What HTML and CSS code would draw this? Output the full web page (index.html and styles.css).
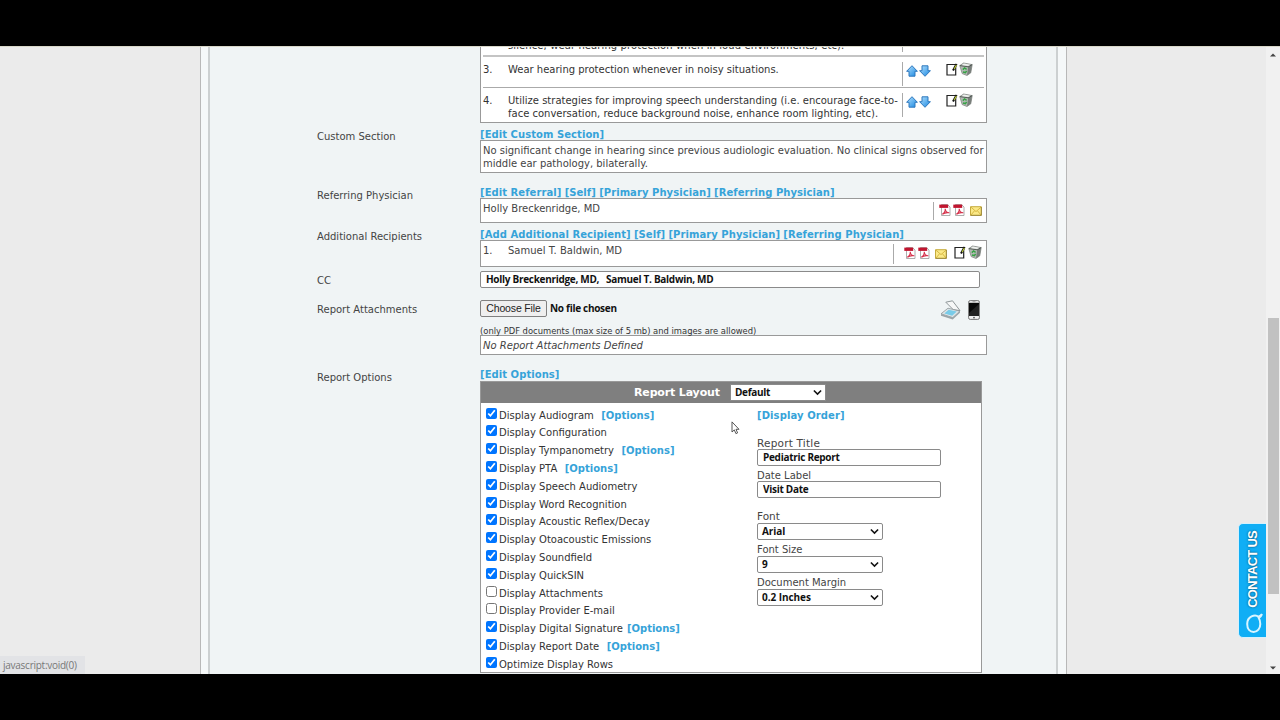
FILE: index.html
```
<!DOCTYPE html>
<html lang="en">
<head>
    <meta charset="utf-8">
    <title>Report</title>
    <link rel="stylesheet" href="styles.css">
</head>

<body>
    <svg class="defs" width="0" height="0">
        <defs>
            <linearGradient id="blue" x1="0" y1="0" x2="1" y2="1">
                <stop offset="0" stop-color="#b5e2ff"/>
                <stop offset="1" stop-color="#1686e0"/>
            </linearGradient>
        </defs>
        <symbol id="up" viewBox="0 0 12 12">
            <path d="M6 .7 11.4 6.3H9V11.2H3V6.3H.6Z" fill="url(#blue)" stroke="#2f78bd" stroke-linejoin="round"/>
        </symbol>
        <symbol id="down" viewBox="0 0 12 12">
            <path d="M6 11.3 .6 5.7H3V.8H9V5.7H11.4Z" fill="url(#blue)" stroke="#2f78bd" stroke-linejoin="round"/>
        </symbol>
        <symbol id="edit" viewBox="0 0 12 13">
            <path d="M1 1.5H9.7V12H1Z" fill="#fff" stroke="#222" stroke-width="1.2"/>
            <path d="M7 7.6 10.6 1" stroke="#111" stroke-width="2"/>
            <path d="M8.2 6 10.4 2" stroke="#c6d53a" stroke-width="1.1"/>
        </symbol>
        <symbol id="trash" viewBox="0 0 14 14">
            <path d="M.8 3.6 4.6 1 13.2 2.6 11.8 10.8 8 13.5 3.2 11.6Z" fill="#b4b9b4" stroke="#777d79" stroke-width=".7"/>
            <path d="M9.2 4.8 13 2.8 11.7 10.7 8 13.3Z" fill="#787e7a"/>
            <path d="M.8 3.6 9.2 4.8 13.2 2.6" fill="none" stroke="#4a504c" stroke-width=".9"/>
            <path d="M2.6 3 5 1.5 11.4 2.7 9 4Z" fill="#eef0ee"/>
            <path d="M3.8 7.6 5.6 6 7.6 7.4M7.6 8.8 6.4 10.6 4 10" fill="none" stroke="#35a344" stroke-width="1.5"/>
        </symbol>
        <symbol id="pdf" viewBox="0 0 12 12">
            <path d="M2.5.5H8.5L11 3V11.5H2.5Z" fill="#fff" stroke="#999" stroke-width=".8"/>
            <path d="M.3.6H9.2V3.9H.3Z" fill="#c1152f"/>
            <path d="M3.3 10.3C5.5 9 6.5 7 6.2 4.8 6.5 7.5 8 8.8 10.3 8.8 8 8.3 5.2 8.9 3.3 10.3Z" fill="none" stroke="#d5304a" stroke-width="1.1"/>
        </symbol>
        <symbol id="mail" viewBox="0 0 12 10">
            <path d="M.5.7H11.3V9.3H.5Z" fill="#fbe988" stroke="#bfa32e" stroke-width=".9"/>
            <path d="M1 1.2 6 5.6 11 1.2M1 9 4.5 4.8M11 9 7.5 4.8" fill="none" stroke="#d2b23c" stroke-width=".9"/>
            <path d="M.5 9.4H11.4V1" fill="none" stroke="#8b7b35" stroke-width=".7"/>
        </symbol>
        <symbol id="scanner" viewBox="0 0 21 20">
            <path d="M5.8 2.2 12.5.8 20 10.6 13.2 9.6Z" fill="#f6f7f7" stroke="#8e9698"/>
            <path d="M1 13.8 8 8.2 19.8 11.2 12.8 17.6Z" fill="#dfe5e7" stroke="#8d9699" stroke-width=".8"/>
            <path d="M4.3 13.4 8.6 9.7 16.8 11.6 12.2 15.7Z" fill="#79cbe8"/>
            <path d="M1 14V15.8L12.7 19.5 20 12.8V11.3L12.8 17.6Z" fill="#9aa4a8"/>
        </symbol>
        <symbol id="phone" viewBox="0 0 12 20">
            <rect x=".6" y=".6" width="10.8" height="18.8" rx="1.6" fill="#f2f2f2" stroke="#777" stroke-width="1"/>
            <path d="M1 2.8H11V16H1Z" fill="#080808"/>
            <path d="M1 13 11 4V16H1Z" fill="#222"/>
            <circle cx="6" cy="17.6" r=".9" fill="#555"/>
            <path d="M4.5 1.7H7.5" stroke="#777" stroke-width=".6"/>
        </symbol>
    </svg>

    <div class="viewport">
        <div class="page">
            <div class="form">

                <div class="row row-list">
                    <div class="label"></div>
                    <div class="field">
                        <div class="box list">
                            <div class="item item-cut">
                                <span class="num"></span>
                                <span class="text">silence, wear hearing protection when in loud environments, etc).</span>
                                <span class="tools"></span>
                            </div>
                            <div class="item item-short">
                                <span class="num">3.</span>
                                <span class="text">Wear hearing protection whenever in noisy situations.</span>
                                <span class="tools">
                                    <svg class="arrow"><use href="#up"/></svg>
                                    <svg class="arrow"><use href="#down"/></svg>
                                    <svg class="edit"><use href="#edit"/></svg>
                                    <svg class="trash"><use href="#trash"/></svg>
                                </span>
                            </div>
                            <div class="item">
                                <span class="num">4.</span>
                                <span class="text">Utilize strategies for improving speech understanding (i.e. encourage face-to-<br>face conversation, reduce background noise, enhance room lighting, etc).</span>
                                <span class="tools">
                                    <svg class="arrow"><use href="#up"/></svg>
                                    <svg class="arrow"><use href="#down"/></svg>
                                    <svg class="edit"><use href="#edit"/></svg>
                                    <svg class="trash"><use href="#trash"/></svg>
                                </span>
                            </div>
                        </div>
                    </div>
                </div>

                <div class="row row-custom">
                    <div class="label">Custom Section</div>
                    <div class="field">
                        <div class="links"><a>[Edit Custom Section]</a></div>
                        <div class="box custom">No significant change in hearing since previous audiologic evaluation. No clinical signs observed for<br>middle ear pathology, bilaterally.</div>
                    </div>
                </div>

                <div class="row row-referring">
                    <div class="label">Referring Physician</div>
                    <div class="field">
                        <div class="links"><a>[Edit Referral]</a> <a>[Self]</a> <a>[Primary Physician]</a> <a>[Referring Physician]</a></div>
                        <div class="box person referring">
                            <span class="text">Holly Breckenridge, MD</span>
                            <span class="tools">
                                <svg class="pdf"><use href="#pdf"/></svg>
                                <svg class="pdf"><use href="#pdf"/></svg>
                                <svg class="mail"><use href="#mail"/></svg>
                            </span>
                        </div>
                    </div>
                </div>

                <div class="row row-additional">
                    <div class="label">Additional Recipients</div>
                    <div class="field">
                        <div class="links"><a>[Add Additional Recipient]</a> <a>[Self]</a> <a>[Primary Physician]</a> <a>[Referring Physician]</a></div>
                        <div class="box person additional">
                            <span class="num">1.</span>
                            <span class="text">Samuel T. Baldwin, MD</span>
                            <span class="tools">
                                <svg class="pdf"><use href="#pdf"/></svg>
                                <svg class="pdf"><use href="#pdf"/></svg>
                                <svg class="mail"><use href="#mail"/></svg>
                                <svg class="edit"><use href="#edit"/></svg>
                                <svg class="trash"><use href="#trash"/></svg>
                            </span>
                        </div>
                    </div>
                </div>

                <div class="row row-cc">
                    <div class="label">CC</div>
                    <div class="field">
                        <input class="cc" type="text" value="Holly Breckenridge, MD,&nbsp;&nbsp; Samuel T. Baldwin, MD">
                    </div>
                </div>

                <div class="row row-attach">
                    <div class="label">Report Attachments</div>
                    <div class="field">
                        <div class="file">
                            <button class="choose">Choose File</button>
                            <span class="nofile">No file chosen</span>
                            <svg class="scanner"><use href="#scanner"/></svg>
                            <svg class="phone"><use href="#phone"/></svg>
                        </div>
                        <div class="note">(only PDF documents (max size of 5 mb) and images are allowed)</div>
                        <div class="box empty">No Report Attachments Defined</div>
                    </div>
                </div>

                <div class="row row-options">
                    <div class="label">Report Options</div>
                    <div class="field">
                        <div class="links"><a>[Edit Options]</a></div>
                        <div class="options">
                            <div class="options-head">
                                <span class="layout">Report Layout</span>
                                <span class="select layout-select">Default<svg viewBox="0 0 8 6"><path d="M.8 1.2 4 4.4 7.2 1.2"/></svg></span>
                            </div>
                            <div class="options-body">
                                <div class="checks">
                                    <label><input type="checkbox" checked><span class="c1">Display Audiogram</span> <a>[Options]</a></label>
                                    <label><input type="checkbox" checked><span>Display Configuration</span></label>
                                    <label><input type="checkbox" checked><span class="c1">Display Tympanometry</span> <a>[Options]</a></label>
                                    <label><input type="checkbox" checked><span class="c1">Display PTA</span> <a>[Options]</a></label>
                                    <label><input type="checkbox" checked><span>Display Speech Audiometry</span></label>
                                    <label><input type="checkbox" checked><span>Display Word Recognition</span></label>
                                    <label><input type="checkbox" checked><span>Display Acoustic Reflex/Decay</span></label>
                                    <label><input type="checkbox" checked><span>Display Otoacoustic Emissions</span></label>
                                    <label><input type="checkbox" checked><span>Display Soundfield</span></label>
                                    <label><input type="checkbox" checked><span>Display QuickSIN</span></label>
                                    <label><input type="checkbox"><span>Display Attachments</span></label>
                                    <label><input type="checkbox"><span>Display Provider E-mail</span></label>
                                    <label><input type="checkbox" checked><span class="c2">Display Digital Signature</span> <a>[Options]</a></label>
                                    <label><input type="checkbox" checked><span class="c1">Display Report Date</span> <a>[Options]</a></label>
                                    <label><input type="checkbox" checked><span>Optimize Display Rows</span></label>
                                </div>
                                <div class="settings">
                                    <a class="order">[Display Order]</a>
                                    <div class="caption title">Report Title</div>
                                    <input type="text" value="Pediatric Report">
                                    <div class="caption second">Date Label</div>
                                    <input type="text" value="Visit Date">
                                    <div class="caption font">Font</div>
                                    <span class="select">Arial<svg viewBox="0 0 8 6"><path d="M.8 1.2 4 4.4 7.2 1.2"/></svg></span>
                                    <div class="caption next">Font Size</div>
                                    <span class="select">9<svg viewBox="0 0 8 6"><path d="M.8 1.2 4 4.4 7.2 1.2"/></svg></span>
                                    <div class="caption next">Document Margin</div>
                                    <span class="select">0.2 Inches<svg viewBox="0 0 8 6"><path d="M.8 1.2 4 4.4 7.2 1.2"/></svg></span>
                                </div>
                            </div>
                        </div>
                    </div>
                </div>

            </div>
        </div>

        <div class="scrollbar">
            <svg class="sb-arrow" viewBox="0 0 6 4"><path d="M0 3.5 3 .5 6 3.5Z"/></svg>
            <div class="thumb"></div>
            <svg class="sb-arrow sb-down" viewBox="0 0 6 4"><path d="M0 .5 3 3.5 6 .5Z"/></svg>
        </div>

        <div class="contact">
            <span>CONTACT US</span>
            <svg viewBox="0 0 18 21"><path d="M13.5 3.8C10 .8 2.2 3.5 2.2 11 2.2 16 5 19 8.6 19 12.5 19 15.3 15.5 15.3 11 15.3 8.5 14.7 6.5 13.8 5 15 4.6 16.3 3 17 1.2 16 2.5 15 3.2 13.5 3.8Z"/></svg>
        </div>
        <div class="status">javascript:void(0)</div>
        <svg class="cursor" viewBox="0 0 9 14"><path d="M1 .9V11L3.3 8.9 4.9 12.6 6.6 11.9 5 8.3H8Z"/></svg>
    </div>
</body>
</html>
```
FILE: styles.css
```
* {
    box-sizing: border-box;
}

body {
    margin: 0;
    padding: 46px 0;
    height: 720px;
    overflow: hidden;
    background: #000;
    font-family: Verdana, "DejaVu Sans", sans-serif;
    font-size: 10px;
    line-height: 13px;
    color: #444;
}

.defs {
    position: absolute;
}

.viewport {
    position: relative;
    display: flex;
    height: 628px;
    overflow: hidden;
    background: #ebebeb;
    border-top: 1px solid #d9d8ca;
}

.page {
    width: 867px;
    height: 627px;
    margin-left: 200px;
    padding: 0 8px 0 7px;
    background: #f5f8f9;
    border: solid #b8b8b8;
    border-width: 0 1px;
}

.form {
    height: 627px;
    padding-left: 107px;
    background: #f0f4f5;
    border: solid #ccd0d1;
    border-width: 0 2px;
}

.row {
    display: flex;
    white-space: nowrap;
}

.label {
    width: 163px;
    flex-shrink: 0;
}

.field {
    width: 506.5px;
}

.box {
    background: #fff;
    border: 1px solid #999;
}

a {
    color: #36a3d9;
    font-weight: bold;
}

.links {
    height: 13px;
    padding-top: 1px;
    letter-spacing: 0.06px;
}

/* recommendations */
.list {
    height: 76px;
    border-top: 0;
    padding: 0 2px;
    color: #333;
    overflow: hidden;
}

.item {
    display: flex;
    height: 31px;
    padding-top: 6px;
}

.item-cut {
    height: 10px;
    padding: 0;
    border-bottom: 2px solid #c4c4c4;
}

.item-cut .text {
    margin-top: -8px;
    letter-spacing: 0.1px;
}

.item-short {
    border-bottom: 1px solid #aaa;
}

.num {
    width: 25px;
}

.item .text {
    width: 394px;
}

.tools {
    display: flex;
    border-left: 1px solid #aaa;
}

.item .tools {
    height: 24px;
    margin-top: -1px;
    padding: 3px 0 0 3px;
}

.item-cut .tools {
    height: 5px;
    margin: 0;
    padding: 0;
}

.arrow {
    width: 12px;
    height: 12px;
    margin-right: 1px;
}

.edit {
    width: 12px;
    height: 13px;
}

.trash {
    width: 14px;
    height: 14px;
}

.item .edit {
    margin: -2px 1px 0 14px;
}

.item .trash {
    margin-top: -3px;
}

/* sections */
.row-custom {
    margin-top: 4px;
}

.row-custom .label {
    padding-top: 3px;
}

.custom {
    height: 33px;
    padding: 3px 2px;
}

.row-referring {
    margin-top: 12px;
}

.row-referring .label {
    padding-top: 4px;
}

.person {
    display: flex;
    padding: 3px 2px 2px;
}

.person .text {
    flex: 1;
}

.referring {
    height: 25px;
}

.referring .tools {
    width: 51px;
    padding: 2px 0 0 5px;
}

.row-additional {
    margin-top: 4px;
}

.row-additional .label {
    padding-top: 3px;
}

.additional {
    height: 27px;
}

.additional .tools {
    width: 91px;
    padding: 3px 0 0 10px;
}

.pdf {
    width: 12px;
    height: 12px;
    margin-right: 2px;
}

.mail {
    width: 12px;
    height: 10px;
    margin: 2px 0 0 3px;
}

.additional .edit {
    margin-left: 7px;
    margin-top: -1px;
}

.additional .trash {
    margin: -2px 0 0 2px;
}

.row-cc {
    margin-top: 4px;
}

.row-cc .label {
    padding-top: 3px;
}

input[type="text"], .select, .nofile {
    font-family: "Trebuchet MS", "Open Sans", sans-serif;
    font-size: 10px;
    font-weight: bold;
    letter-spacing: -0.29px;
    color: #111;
}

input[type="text"] {
    display: block;
    width: 184px;
    height: 17px;
    margin: 0;
    padding: 0 5px;
    background: #fff;
    border: 1px solid #8a8a8a;
    border-radius: 2px;
}

input[type="text"].cc {
    width: 500px;
    padding-bottom: 1px;
}

.row-attach {
    margin-top: 12px;
}

.row-attach .label {
    padding-top: 3px;
}

.file {
    display: flex;
    height: 25px;
}

.choose {
    width: 67px;
    height: 17px;
    padding: 0 0 1px;
    font-family: Arial, "Liberation Sans", sans-serif;
    font-size: 10.5px;
    line-height: 14px;
    letter-spacing: -0.15px;
    color: #222;
    background: #efefef;
    border: 1px solid #808080;
    border-radius: 2px;
}

.nofile {
    margin: 2px 0 0 3px;
    flex: 1;
}

.scanner {
    width: 21px;
    height: 20px;
}

.phone {
    width: 12px;
    height: 20px;
    margin: 0 7px 0 7px;
}

.note {
    height: 10px;
    font-size: 8.4px;
    line-height: 12px;
    color: #333;
}

.empty {
    height: 20px;
    padding: 3px 2px;
    font-style: italic;
}

/* report options */
.row-options {
    margin-top: 12px;
}

.row-options .label {
    padding-top: 4px;
}

.row-options .links {
    height: 14px;
}

.options {
    width: 501.5px;
    height: 292px;
    background: #fff;
    border: 1px solid #999;
}

.options-head {
    display: flex;
    height: 21px;
    padding: 2px 0 0 153px;
    background: #7f7f7f;
}

.layout {
    width: 96px;
    padding-top: 2px;
    font-size: 11px;
    letter-spacing: -0.15px;
    font-weight: bold;
    color: #fff;
}

.select {
    display: flex;
    align-items: center;
    justify-content: space-between;
    width: 126px;
    height: 17px;
    padding: 0 3px 1px 4px;
    letter-spacing: -0.05px;
    background: #fff;
    border: 1px solid #8a8a8a;
    border-radius: 2px;
}

.select svg {
    width: 9px;
    height: 7px;
    fill: none;
    stroke: #111;
    stroke-width: 1.4;
}

.layout-select {
    width: 96px;
    padding-bottom: 0;
    letter-spacing: -0.3px;
    border-radius: 0;
}

.options-body {
    display: flex;
}

.checks {
    width: 276px;
    padding: 4px 0 0 5px;
    color: #333;
}

.checks label {
    display: flex;
    height: 17.8px;
    padding-top: 1.6px;
}

.checks input {
    width: 11px;
    height: 11px;
    margin: -1px 2.5px 0 -0.5px;
}

.c1 {
    margin-right: 7.5px;
}

.c2 {
    margin-right: 4px;
}

.settings {
    padding-top: 6px;
}

.settings input[type="text"] {
    padding-bottom: 1px;
}

.order {
    display: block;
    margin-bottom: 15px;
    letter-spacing: 0.1px;
}

.caption {
    height: 13px;
}

.settings .title {
    height: 12px;
    font-size: 10.5px;
    letter-spacing: 0.2px;
}

.second {
    margin-top: 3px;
    height: 12px;
}

.font {
    margin-top: 12px;
    font-size: 10.5px;
}

.next {
    margin-top: 3px;
}

/* browser parts */
.scrollbar {
    display: flex;
    flex-direction: column;
    width: 14px;
    margin-left: auto;
    padding: 6px 1px 4px;
    background: #f1f1f1;
}

.sb-arrow {
    width: 6px;
    height: 4px;
    margin: 0 auto;
    fill: #444;
}

.thumb {
    width: 11px;
    height: 276px;
    margin: 261px 0 0 1px;
    background: #c1c1c1;
}

.sb-down {
    margin-top: auto;
}

.contact {
    position: absolute;
    left: 1238px;
    top: 476px;
    display: flex;
    flex-direction: column;
    align-items: center;
    justify-content: space-between;
    width: 28px;
    height: 115px;
    padding: 7px 0 3px;
    background: #10aef5;
    border: 1px solid #d5f1fd;
    border-right: 0;
    border-radius: 5px 0 0 5px;
}

/* reads from bottom to top */
.contact span {
    writing-mode: vertical-rl;
    transform: rotate(180deg);
    font-family: Arial, "Liberation Sans", sans-serif;
    font-size: 13px;
    font-weight: bold;
    letter-spacing: -0.75px;
    color: #fff;
    text-shadow: 0 0 2px #00344f;
}

.contact svg {
    width: 18px;
    height: 21px;
    margin-left: 3px;
    fill: none;
    stroke: #d9f5ff;
    stroke-width: 2;
}

.status {
    position: absolute;
    left: 0;
    top: 609px;
    width: 85px;
    height: 18px;
    padding: 3px 3px;
    font-family: "Open Sans", sans-serif;
    font-size: 10px;
    letter-spacing: -0.26px;
    color: #777;
    background: #e2e3e6;
}

.cursor {
    position: absolute;
    left: 731px;
    top: 374px;
    width: 9px;
    height: 14px;
    fill: #fff;
    stroke: #444;
    stroke-width: .9;
}
```
